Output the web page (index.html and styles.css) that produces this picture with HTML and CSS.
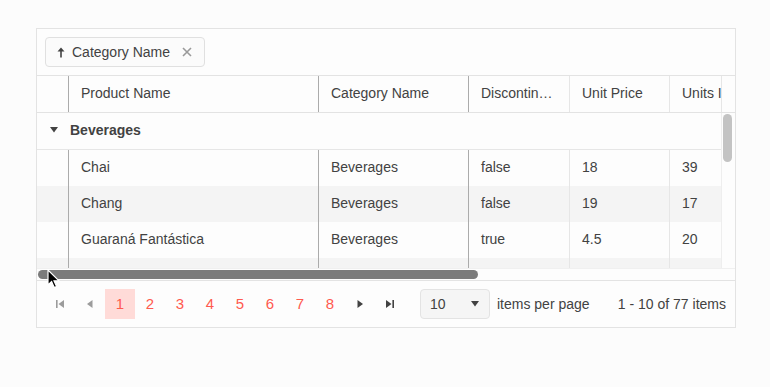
FILE: index.html
```html
<!DOCTYPE html>
<html>

<head>
    <title>Grouped Products Grid</title>
    <link rel="stylesheet" href="styles.css">
</head>

<body>

    <div class="grid">
        <div class="group-panel">
            <span class="chip">
                <svg class="chip-sort" width="8" height="11" viewBox="0 0 8 11">
                    <path d="M4 0.5 L7.5 4.5 H4.8 V10.5 H3.2 V4.5 H0.5 Z" fill="#424242" />
                </svg>
                <span class="chip-text">Category Name</span>
                <svg class="chip-close" width="10" height="10" viewBox="0 0 10 10">
                    <path d="M1 1 L9 9 M9 1 L1 9" stroke="#9a9a9a" stroke-width="1.6" />
                </svg>
            </span>
        </div>

        <div class="grid-header">
            <div class="header-row">
                <div class="cell c0"></div>
                <div class="cell c1 dark">Product Name</div>
                <div class="cell c2 dark">Category Name</div>
                <div class="cell c3 dark">Discontin…</div>
                <div class="cell c4">Unit Price</div>
                <div class="cell c5 cut">Units I</div>
            </div>
            <div class="header-gap"></div>
        </div>

        <div class="grid-body">
            <div class="body-content">
                <div class="group-row">
                    <span class="group-toggle">
                        <svg width="8" height="6" viewBox="0 0 8 6">
                            <path d="M0 0 H8 L4 5.5 Z" fill="#424242" />
                        </svg>
                    </span>
                    <span class="group-title">Beverages</span>
                </div>
                <div class="row">
                    <div class="cell c0"></div>
                    <div class="cell c1 dark">Chai</div>
                    <div class="cell c2 dark">Beverages</div>
                    <div class="cell c3 dark">false</div>
                    <div class="cell c4">18</div>
                    <div class="cell c5">39</div>
                </div>
                <div class="row alt">
                    <div class="cell c0"></div>
                    <div class="cell c1 dark">Chang</div>
                    <div class="cell c2 dark">Beverages</div>
                    <div class="cell c3 dark">false</div>
                    <div class="cell c4">19</div>
                    <div class="cell c5">17</div>
                </div>
                <div class="row">
                    <div class="cell c0"></div>
                    <div class="cell c1 dark">Guaraná Fantástica</div>
                    <div class="cell c2 dark">Beverages</div>
                    <div class="cell c3 dark">true</div>
                    <div class="cell c4">4.5</div>
                    <div class="cell c5">20</div>
                </div>
                <div class="row alt">
                    <div class="cell c0"></div>
                    <div class="cell c1 dark"></div>
                    <div class="cell c2 dark"></div>
                    <div class="cell c3 dark"></div>
                    <div class="cell c4"></div>
                    <div class="cell c5"></div>
                </div>
            </div>
            <div class="vscroll"><div class="vthumb"></div></div>
        </div>

        <div class="hscroll"><div class="hthumb"></div></div>

        <div class="pager">
            <span class="pager-btn disabled">
                <svg width="8" height="8" viewBox="0 0 8 8">
                    <rect x="0" y="0" width="1.6" height="8" fill="currentColor" />
                    <path d="M8 0 V8 L2.5 4 Z" fill="currentColor" />
                </svg>
            </span>
            <span class="pager-btn disabled">
                <svg width="6" height="8" viewBox="0 0 6 8">
                    <path d="M5.5 0 V8 L0 4 Z" fill="currentColor" />
                </svg>
            </span>
            <span class="page selected">1</span>
            <span class="page">2</span>
            <span class="page">3</span>
            <span class="page">4</span>
            <span class="page">5</span>
            <span class="page">6</span>
            <span class="page">7</span>
            <span class="page">8</span>
            <span class="pager-btn">
                <svg width="6" height="8" viewBox="0 0 6 8">
                    <path d="M0.5 0 V8 L6 4 Z" fill="currentColor" />
                </svg>
            </span>
            <span class="pager-btn">
                <svg width="8" height="8" viewBox="0 0 8 8">
                    <path d="M0 0 V8 L5.5 4 Z" fill="currentColor" />
                    <rect x="6.4" y="0" width="1.6" height="8" fill="currentColor" />
                </svg>
            </span>
            <span class="page-size">
                <span>10</span>
                <svg width="8" height="6" viewBox="0 0 8 6">
                    <path d="M0 0 H8 L4 5.5 Z" fill="#424242" />
                </svg>
            </span>
            <span class="pager-label">items per page</span>
            <span class="pager-info">1 - 10 of 77 items</span>
        </div>
    </div>

    <svg class="cursor" width="13" height="20" viewBox="0 0 13 20">
        <path d="M1 1 V16 L4.6 12.6 L7.2 18.6 L9.6 17.6 L7 11.8 H12 Z" fill="#000" stroke="#fff" stroke-width="1.2" />
    </svg>

</body>

</html>
```

FILE: styles.css
```css
body {
    font-family: 'Liberation Sans', Arial, sans-serif;
    font-size: 14px;
    color: #424242;
    background-color: #fcfcfc;
    margin: 0;
    padding: 28px 0 0 36px;
    position: relative;
    height: 359px;
    overflow: hidden;
}

.grid {
    width: 698px;
    height: 298px;
    border: 1px solid #e3e3e3;
    background: #fdfdfd;
    display: flex;
    flex-direction: column;
}

/* group panel with the chip */
.group-panel {
    height: 47px;
    padding: 8px;
    box-sizing: border-box;
    border-bottom: 1px solid #e3e3e3;
    flex-shrink: 0;
}

.chip {
    display: inline-flex;
    align-items: center;
    height: 30px;
    box-sizing: border-box;
    border: 1px solid #e0e0e0;
    border-radius: 4px;
    padding: 0 12px 0 11px;
    background: #fbfbfb;
}

.chip-sort {
    margin-right: 7px;
}

.chip-text {
    margin-right: 12px;
}

/* header */
.grid-header {
    display: flex;
    height: 37px;
    box-sizing: border-box;
    border-bottom: 1px solid #e3e3e3;
    flex-shrink: 0;
}

.header-row,
.row {
    display: flex;
    width: 684px;
    overflow: hidden;
    flex-shrink: 0;
}

.header-gap {
    flex: 1;
    border-left: 1px solid #e6e6e6;
}

.cell {
    flex-shrink: 0;
    box-sizing: border-box;
    height: 36px;
    line-height: 34px;
    padding: 0 12px 2px;
    white-space: nowrap;
    overflow: hidden;
    border-left: 1px solid #e6e6e6;
}

.cell.dark {
    border-left-color: #ababab;
}

.c0 {
    width: 31px;
    border-left: none;
}

.c1 {
    width: 250px;
}

.c2 {
    width: 150px;
}

.c3 {
    width: 101px;
}

.c4 {
    width: 100px;
}

.c5 {
    width: 100px;
}

/* body */
.grid-body {
    display: flex;
    height: 155px;
    flex-shrink: 0;
    overflow: hidden;
}

.body-content {
    width: 684px;
    flex-shrink: 0;
    overflow: hidden;
}

.group-row {
    display: flex;
    align-items: center;
    height: 37px;
    padding-bottom: 2px;
    box-sizing: border-box;
    border-bottom: 1px solid #e6e6e6;
}

.group-toggle {
    width: 31px;
    display: flex;
    justify-content: center;
    padding-left: 2px;
    box-sizing: border-box;
}

.group-title {
    font-weight: bold;
    padding-left: 2px;
}

.row.alt {
    background: #f4f4f4;
}

.vscroll {
    flex: 1;
    padding: 1px 2px 0 1px;
    border-left: 1px solid #eeeeee;
}

.vthumb {
    width: 9px;
    height: 48px;
    border-radius: 5px;
    background: #c3c3c3;
}

.hscroll {
    height: 12px;
    padding: 1px 0 0 1px;
    box-sizing: border-box;
    flex-shrink: 0;
    border-top: 1px solid #f0f0f0;
}

.hthumb {
    width: 440px;
    height: 9px;
    border-radius: 5px;
    background: #7b7b7b;
}

/* pager */
.pager {
    display: flex;
    align-items: center;
    height: 47px;
    box-sizing: border-box;
    padding: 0 9px 1px 8px;
    border-top: 1px solid #e3e3e3;
    flex-shrink: 0;
}

.pager-btn,
.page {
    width: 30px;
    height: 30px;
    display: flex;
    align-items: center;
    justify-content: center;
    color: #424242;
}

.pager-btn.disabled {
    color: #9c9c9c;
}

.page {
    color: #ff5a4f;
    font-size: 15px;
}

.page.selected {
    background: #ffdbd8;
}

.page-size {
    display: flex;
    align-items: center;
    justify-content: space-between;
    width: 70px;
    height: 30px;
    box-sizing: border-box;
    margin-left: 15px;
    padding: 0 10px 0 9px;
    border: 1px solid #e3e3e3;
    border-radius: 4px;
    background: #f5f5f5;
}

.pager-label {
    margin-left: 7px;
}

.pager-info {
    margin-left: auto;
}

.cursor {
    position: absolute;
    left: 47px;
    top: 269px;
}
```
